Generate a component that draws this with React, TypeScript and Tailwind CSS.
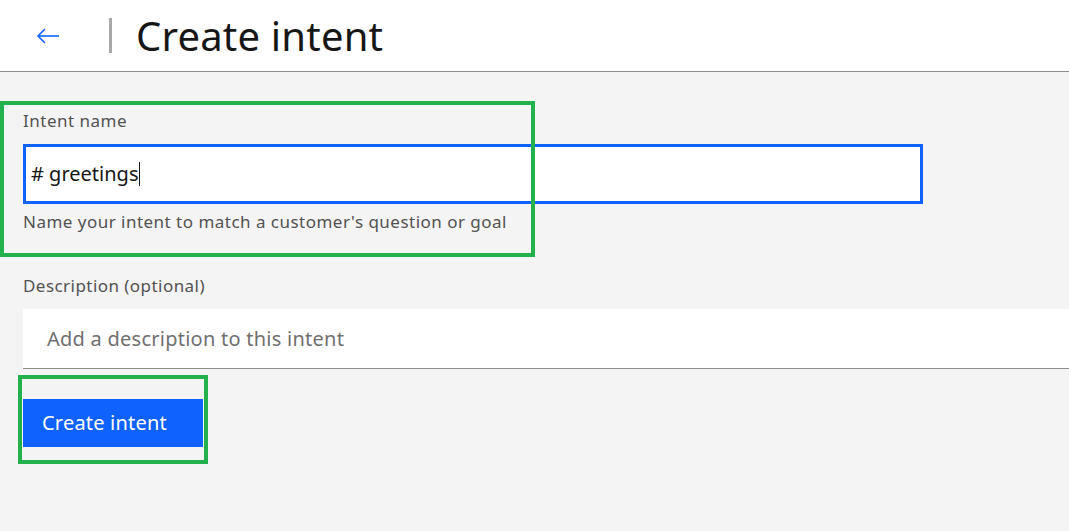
export default function App() {
  return (
    <div
      className="relative w-[1069px] h-[531px] overflow-hidden bg-[#f4f4f4] text-[#161616]"
      style={{ fontFamily: '"Noto Sans", "Open Sans", sans-serif' }}
    >
      {/* Header */}
      <div className="h-[72px] bg-white border-b border-[#8d8d8d] flex items-center">
        <button className="ml-[36px] w-[24px] h-[24px] flex items-center justify-center text-[#0f62fe]">
          <svg width="24" height="16" viewBox="0 0 24 16" fill="none" stroke="currentColor" strokeWidth="1.6">
            <path d="M23 8H2" />
            <path d="M9 1L2 8l7 7" />
          </svg>
        </button>
        <div className="ml-[49px] w-[3px] h-[35px] bg-[#a8a8a8]" />
        <h1 className="ml-[24px] text-[40px] leading-none font-normal tracking-[0.2px] mt-[1px]">Create intent</h1>
      </div>

      {/* Form */}
      <div className="pl-[23px] pt-[39px]">
        <label className="block text-[17px] leading-[20px] tracking-[0.5px] text-[#525252]">Intent name</label>
        <div className="mt-[13px] w-[900px] h-[60px] bg-white border-[3px] border-[#0f62fe] flex items-center pl-[5px]">
          <span className="text-[20px] text-[#161616]"># greetings</span>
          <span className="w-px h-[24px] bg-[#161616] ml-[1px]" />
        </div>
        <p className="mt-[7px] text-[17px] leading-[22px] tracking-[0.48px] text-[#525252]">
          Name your intent to match a customer's question or goal
        </p>

        <label className="block mt-[43px] text-[17px] leading-[20px] tracking-[0.45px] text-[#525252]">
          Description (optional)
        </label>
        <div className="mt-[13px] h-[60px] bg-white border-b border-[#8d8d8d] flex items-center pl-[24px]">
          <span className="text-[20px] tracking-[0.25px] text-[#6f6f6f]">Add a description to this intent</span>
        </div>

        <button className="mt-[30px] w-[180px] h-[48px] bg-[#0f62fe] text-white text-[20px] tracking-[0.2px] text-left pl-[19px]">
          Create intent
        </button>
      </div>

      {/* Annotation boxes */}
      <div className="absolute left-0 top-[101px] w-[535px] h-[156px] border-[4px] border-[#22b14c]" />
      <div className="absolute left-[18px] top-[375px] w-[190px] h-[89px] border-[4px] border-[#22b14c]" />
    </div>
  );
}
